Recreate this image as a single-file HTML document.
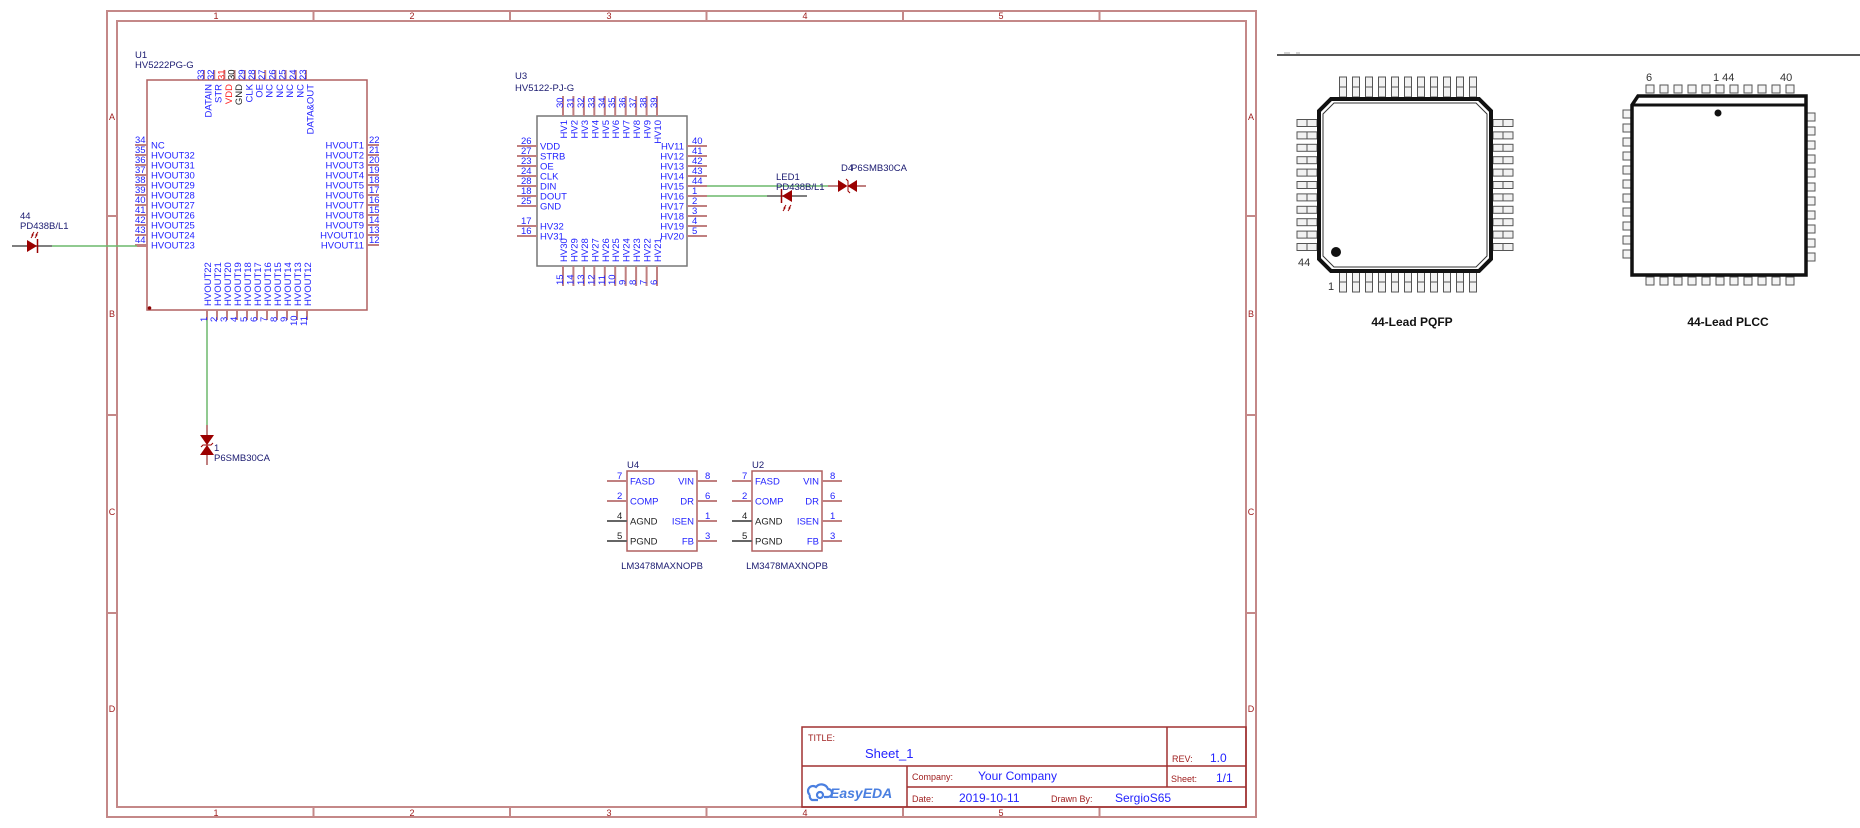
<!DOCTYPE html>
<html><head><meta charset="utf-8"><style>
html,body{margin:0;padding:0;background:#fff;width:1860px;height:828px;overflow:hidden}
svg{display:block}
text{font-family:"Liberation Sans",sans-serif}
.b{fill:#2323ff;font-size:9.5px}
.k{fill:#222;font-size:9.5px}
.r{fill:#ff2020;font-size:9.5px}
.n{fill:#1a1a70;font-size:9.5px}
.fr{fill:#a02020;font-size:9px}
.p{stroke:#c08080;stroke-width:2}
.pg{stroke:#666;stroke-width:2}
</style></head><body>
<svg width="1860" height="828" viewBox="0 0 1860 828" xmlns="http://www.w3.org/2000/svg">
<!-- frame -->
<g fill="none" stroke="#c48888" stroke-width="2">
<rect x="107" y="11" width="1149" height="806"/>
<rect x="117" y="21" width="1129" height="786"/>
<path d="M313.5 11V21M510 11V21M706.5 11V21M903 11V21M1099.5 11V21M313.5 807V817M510 807V817M706.5 807V817M903 807V817M1099.5 807V817M107 216H117M107 415H117M107 613H117M1246 216H1256M1246 415H1256M1246 613H1256"/>
</g>
<g class="fr" text-anchor="middle" font-size="9">
<text x="216" y="19">1</text><text x="412" y="19">2</text><text x="609" y="19">3</text><text x="805" y="19">4</text><text x="1001" y="19">5</text>
<text x="216" y="816">1</text><text x="412" y="816">2</text><text x="609" y="816">3</text><text x="805" y="816">4</text><text x="1001" y="816">5</text>
<text x="112" y="120">A</text><text x="112" y="317">B</text><text x="112" y="515">C</text><text x="112" y="712">D</text>
<text x="1251" y="120">A</text><text x="1251" y="317">B</text><text x="1251" y="515">C</text><text x="1251" y="712">D</text>
</g>
<!-- title block -->
<g fill="none" stroke="#a03030" stroke-width="1.5">
<rect x="802" y="727" width="444" height="80"/>
<path d="M802 766H1246M907 787H1246M907 766V807M1167 727V787"/>
</g>
<text class="fr" x="808" y="741" font-size="9">TITLE:</text>
<text x="865" y="758" fill="#2323ff" font-size="13">Sheet_1</text>
<text class="fr" x="1172" y="762" font-size="10">REV:</text>
<text x="1210" y="762" fill="#2323ff" font-size="12">1.0</text>
<text class="fr" x="912" y="780" font-size="10">Company:</text>
<text x="978" y="780" fill="#2323ff" font-size="12">Your Company</text>
<text class="fr" x="1171" y="782" font-size="10">Sheet:</text>
<text x="1216" y="782" fill="#2323ff" font-size="12">1/1</text>
<text class="fr" x="912" y="802" font-size="10">Date:</text>
<text x="959" y="802" fill="#2323ff" font-size="12">2019-10-11</text>
<text class="fr" x="1051" y="802" font-size="10">Drawn By:</text>
<text x="1115" y="802" fill="#2323ff" font-size="12">SergioS65</text>
<g fill="none" stroke="#4a7fe0" stroke-width="2.2"><path d="M810 795a5 5 0 0 1 6-8a7 7 0 0 1 12 2a4 4 0 0 1 0 8h-4M818 800h-6a4 4 0 0 1-2-5"/><circle cx="820" cy="795" r="3"/></g>
<text x="830" y="798" fill="#4a7fe0" font-size="14" font-style="italic" font-weight="bold">EasyEDA</text>

<!-- U1 -->
<text class="n" x="135" y="58">U1</text><text class="n" x="135" y="68">HV5222PG-G</text>
<rect x="147" y="80" width="220" height="230" fill="none" stroke="#b06060" stroke-width="1.5"/>
<circle cx="149.5" cy="308" r="1.8" fill="#8b0000"/>
<g class="p"><path d="M204 70V80M214.2 70V80M224.4 70V80M234.6 70V80M244.8 70V80M255 70V80M265.2 70V80M275.4 70V80M285.6 70V80M295.8 70V80M306 70V80"/>
<path d="M135 145H147M135 155H147M135 165H147M135 175H147M135 185H147M135 195H147M135 205H147M135 215H147M135 225H147M135 235H147M135 245H147"/>
<path d="M367 145H379M367 155H379M367 165H379M367 175H379M367 185H379M367 195H379M367 205H379M367 215H379M367 225H379M367 235H379M367 245H379"/>
<path d="M207 310V320M217 310V320M227 310V320M237 310V320M247 310V320M257 310V320M267 310V320M277 310V320M287 310V320M297 310V320M307 310V320"/></g>
<g class="b">
<text transform="translate(204,80) rotate(-90)">33</text><text transform="translate(214.2,80) rotate(-90)">32</text><text class="r" transform="translate(224.4,80) rotate(-90)">31</text><text class="k" transform="translate(234.6,80) rotate(-90)">30</text><text transform="translate(244.8,80) rotate(-90)">29</text><text transform="translate(255,80) rotate(-90)">28</text><text transform="translate(265.2,80) rotate(-90)">27</text><text transform="translate(275.4,80) rotate(-90)">26</text><text transform="translate(285.6,80) rotate(-90)">25</text><text transform="translate(295.8,80) rotate(-90)">24</text><text transform="translate(306,80) rotate(-90)">23</text>
</g>
<g class="b" text-anchor="end">
<text transform="translate(211.5,84) rotate(-90)">DATAIN</text><text transform="translate(221.7,84) rotate(-90)">STR</text><text class="r" transform="translate(231.9,84) rotate(-90)">VDD</text><text class="k" transform="translate(242.1,84) rotate(-90)">GND</text><text transform="translate(252.3,84) rotate(-90)">CLK</text><text transform="translate(262.5,84) rotate(-90)">OE</text><text transform="translate(272.7,84) rotate(-90)">NC</text><text transform="translate(282.9,84) rotate(-90)">NC</text><text transform="translate(293.1,84) rotate(-90)">NC</text><text transform="translate(303.3,84) rotate(-90)">NC</text><text transform="translate(313.5,84) rotate(-90)">DATA&amp;OUT</text>
</g>
<g class="b">
<text x="135" y="143">34</text><text x="135" y="153">35</text><text x="135" y="163">36</text><text x="135" y="173">37</text><text x="135" y="183">38</text><text x="135" y="193">39</text><text x="135" y="203">40</text><text x="135" y="213">41</text><text x="135" y="223">42</text><text x="135" y="233">43</text><text x="135" y="243">44</text>
<text x="151" y="148.5">NC</text><text x="151" y="158.5">HVOUT32</text><text x="151" y="168.5">HVOUT31</text><text x="151" y="178.5">HVOUT30</text><text x="151" y="188.5">HVOUT29</text><text x="151" y="198.5">HVOUT28</text><text x="151" y="208.5">HVOUT27</text><text x="151" y="218.5">HVOUT26</text><text x="151" y="228.5">HVOUT25</text><text x="151" y="238.5">HVOUT24</text><text x="151" y="248.5">HVOUT23</text>
<text x="369" y="143">22</text><text x="369" y="153">21</text><text x="369" y="163">20</text><text x="369" y="173">19</text><text x="369" y="183">18</text><text x="369" y="193">17</text><text x="369" y="203">16</text><text x="369" y="213">15</text><text x="369" y="223">14</text><text x="369" y="233">13</text><text x="369" y="243">12</text>
</g>
<g class="b" text-anchor="end">
<text x="364" y="148.5">HVOUT1</text><text x="364" y="158.5">HVOUT2</text><text x="364" y="168.5">HVOUT3</text><text x="364" y="178.5">HVOUT4</text><text x="364" y="188.5">HVOUT5</text><text x="364" y="198.5">HVOUT6</text><text x="364" y="208.5">HVOUT7</text><text x="364" y="218.5">HVOUT8</text><text x="364" y="228.5">HVOUT9</text><text x="364" y="238.5">HVOUT10</text><text x="364" y="248.5">HVOUT11</text>
</g>
<g class="b">
<text transform="translate(211,306) rotate(-90)">HVOUT22</text><text transform="translate(221,306) rotate(-90)">HVOUT21</text><text transform="translate(231,306) rotate(-90)">HVOUT20</text><text transform="translate(241,306) rotate(-90)">HVOUT19</text><text transform="translate(251,306) rotate(-90)">HVOUT18</text><text transform="translate(261,306) rotate(-90)">HVOUT17</text><text transform="translate(271,306) rotate(-90)">HVOUT16</text><text transform="translate(281,306) rotate(-90)">HVOUT15</text><text transform="translate(291,306) rotate(-90)">HVOUT14</text><text transform="translate(301,306) rotate(-90)">HVOUT13</text><text transform="translate(311,306) rotate(-90)">HVOUT12</text>
<text transform="translate(207,322) rotate(-90)">1</text><text transform="translate(217,322) rotate(-90)">2</text><text transform="translate(227,322) rotate(-90)">3</text><text transform="translate(237,322) rotate(-90)">4</text><text transform="translate(247,322) rotate(-90)">5</text><text transform="translate(257,322) rotate(-90)">6</text><text transform="translate(267,322) rotate(-90)">7</text><text transform="translate(277,322) rotate(-90)">8</text><text transform="translate(287,322) rotate(-90)">9</text><text transform="translate(297,326) rotate(-90)">10</text><text transform="translate(307,326) rotate(-90)">11</text>
</g>
<!-- left LED -->
<text class="n" x="20" y="219">44</text><text class="n" x="20" y="229">PD438B/L1</text>
<path d="M12 246H52" stroke="#555" stroke-width="1.5"/>
<path d="M52 246H137" stroke="#6cb86c" stroke-width="1.5"/>
<path d="M137 246H147" class="p"/>
<path d="M27 240L37 246L27 252Z" fill="#9b0000"/><path d="M37.5 239V253" stroke="#9b0000" stroke-width="1.5"/>
<path d="M31 238l2-3-1 0 2-3M35 238l2-3-1 0 2-3" stroke="#9b0000" fill="none" stroke-width="1"/>
<!-- TVS vertical -->
<path d="M207 320V425" stroke="#6cb86c" stroke-width="1.5"/>
<path d="M207 425V435M207 455V465" class="p"/>
<path d="M200 435H214L207 445ZM200 455H214L207 445Z" fill="#9b0000"/>
<path d="M201 447L203 445H211L213 443" stroke="#9b0000" fill="none" stroke-width="1"/>
<text class="n" x="214" y="451">1</text><text class="n" x="214" y="461">P6SMB30CA</text>

<!-- U3 -->
<text class="n" x="515" y="79">U3</text><text class="n" x="515" y="91">HV5122-PJ-G</text>
<rect x="537" y="116" width="150" height="150" fill="none" stroke="#777" stroke-width="1.5"/>
<g class="p"><path d="M563 96V116M573.4 96V116M583.9 96V116M594.3 96V116M604.8 96V116M615.2 96V116M625.7 96V116M636.1 96V116M646.6 96V116M657 96V116"/>
<path d="M563 266V286M573.4 266V286M583.9 266V286M594.3 266V286M604.8 266V286M615.2 266V286M625.7 266V286M636.1 266V286M646.6 266V286M657 266V286"/>
<path d="M517 146H537M517 156H537M517 166H537M517 176H537M517 186H537M517 196H537M517 206H537M517 226H537M517 236H537"/>
<path d="M687 146H707M687 156H707M687 166H707M687 176H707M687 186H707M687 196H707M687 206H707M687 216H707M687 226H707M687 236H707"/></g>
<g class="b">
<text transform="translate(563,108) rotate(-90)">30</text><text transform="translate(573.4,108) rotate(-90)">31</text><text transform="translate(583.9,108) rotate(-90)">32</text><text transform="translate(594.3,108) rotate(-90)">33</text><text transform="translate(604.8,108) rotate(-90)">34</text><text transform="translate(615.2,108) rotate(-90)">35</text><text transform="translate(625.7,108) rotate(-90)">36</text><text transform="translate(636.1,108) rotate(-90)">37</text><text transform="translate(646.6,108) rotate(-90)">38</text><text transform="translate(657,108) rotate(-90)">39</text>
<text transform="translate(563,285) rotate(-90)">15</text><text transform="translate(573.4,285) rotate(-90)">14</text><text transform="translate(583.9,285) rotate(-90)">13</text><text transform="translate(594.3,285) rotate(-90)">12</text><text transform="translate(604.8,285) rotate(-90)">11</text><text transform="translate(615.2,285) rotate(-90)">10</text><text transform="translate(625.7,285) rotate(-90)">9</text><text transform="translate(636.1,285) rotate(-90)">8</text><text transform="translate(646.6,285) rotate(-90)">7</text><text transform="translate(657,285) rotate(-90)">6</text>
<text transform="translate(567,262) rotate(-90)">HV30</text><text transform="translate(577.4,262) rotate(-90)">HV29</text><text transform="translate(587.9,262) rotate(-90)">HV28</text><text transform="translate(598.3,262) rotate(-90)">HV27</text><text transform="translate(608.8,262) rotate(-90)">HV26</text><text transform="translate(619.2,262) rotate(-90)">HV25</text><text transform="translate(629.7,262) rotate(-90)">HV24</text><text transform="translate(640.1,262) rotate(-90)">HV23</text><text transform="translate(650.6,262) rotate(-90)">HV22</text><text transform="translate(661,262) rotate(-90)">HV21</text>
</g>
<g class="b" text-anchor="end">
<text transform="translate(567,120) rotate(-90)">HV1</text><text transform="translate(577.4,120) rotate(-90)">HV2</text><text transform="translate(587.9,120) rotate(-90)">HV3</text><text transform="translate(598.3,120) rotate(-90)">HV4</text><text transform="translate(608.8,120) rotate(-90)">HV5</text><text transform="translate(619.2,120) rotate(-90)">HV6</text><text transform="translate(629.7,120) rotate(-90)">HV7</text><text transform="translate(640.1,120) rotate(-90)">HV8</text><text transform="translate(650.6,120) rotate(-90)">HV9</text><text transform="translate(661,120) rotate(-90)">HV10</text>
<text x="684" y="149.5">HV11</text><text x="684" y="159.5">HV12</text><text x="684" y="169.5">HV13</text><text x="684" y="179.5">HV14</text><text x="684" y="189.5">HV15</text><text x="684" y="199.5">HV16</text><text x="684" y="209.5">HV17</text><text x="684" y="219.5">HV18</text><text x="684" y="229.5">HV19</text><text x="684" y="239.5">HV20</text>
</g>
<g class="b">
<text x="521" y="144">26</text><text x="521" y="154">27</text><text x="521" y="164">23</text><text x="521" y="174">24</text><text x="521" y="184">28</text><text x="521" y="194">18</text><text x="521" y="204">25</text><text x="521" y="224">17</text><text x="521" y="234">16</text>
<text x="540" y="149.5">VDD</text><text x="540" y="159.5">STRB</text><text x="540" y="169.5">OE</text><text x="540" y="179.5">CLK</text><text x="540" y="189.5">DIN</text><text x="540" y="199.5">DOUT</text><text x="540" y="209.5">GND</text><text x="540" y="229.5">HV32</text><text x="540" y="239.5">HV31</text>
<text x="692" y="144">40</text><text x="692" y="154">41</text><text x="692" y="164">42</text><text x="692" y="174">43</text><text x="692" y="184">44</text><text x="692" y="194">1</text><text x="692" y="204">2</text><text x="692" y="214">3</text><text x="692" y="224">4</text><text x="692" y="234">5</text>
</g>
<!-- wires LED1 / D4 -->
<path d="M707 186H828M707 196H767" stroke="#6cb86c" stroke-width="1.5"/>
<path d="M767 196H807" stroke="#555" stroke-width="1.5"/>
<path d="M792 190L782 196L792 202Z" fill="#9b0000"/><path d="M781.5 189V203" stroke="#9b0000" stroke-width="1.5"/>
<path d="M783 211l2-3-1 0 2-3M788 211l2-3-1 0 2-3" stroke="#9b0000" fill="none" stroke-width="1"/>
<text class="n" x="776" y="180">LED1</text><text class="n" x="776" y="190">PD438B/L1</text>
<path d="M828 186H838M857 186H866" class="p"/>
<path d="M838 180V192L847.5 186ZM857 180V192L847.5 186Z" fill="#9b0000"/>
<path d="M846 179L848 181V191L850 193" stroke="#9b0000" fill="none" stroke-width="1"/>
<text class="n" x="841" y="171">D4</text><text class="n" x="851" y="171">P6SMB30CA</text>

<!-- U4 -->
<text class="n" x="627" y="468">U4</text>
<rect x="627" y="471" width="70" height="80" fill="none" stroke="#b06060" stroke-width="1.5"/>
<path d="M607 481H627M607 501H627M697 481H717M697 501H717M697 521H717M697 541H717" class="p"/>
<path d="M607 521H627M607 541H627" class="pg"/>
<g class="b"><text x="617" y="479">7</text><text x="617" y="499">2</text><text class="k" x="617" y="519">4</text><text class="k" x="617" y="539">5</text>
<text x="630" y="484.5">FASD</text><text x="630" y="504.5">COMP</text><text class="k" x="630" y="524.5">AGND</text><text class="k" x="630" y="544.5">PGND</text>
<text x="705" y="479">8</text><text x="705" y="499">6</text><text x="705" y="519">1</text><text x="705" y="539">3</text></g>
<g class="b" text-anchor="end"><text x="694" y="484.5">VIN</text><text x="694" y="504.5">DR</text><text x="694" y="524.5">ISEN</text><text x="694" y="544.5">FB</text></g>
<text class="n" x="662" y="569" text-anchor="middle">LM3478MAXNOPB</text>
<!-- U2 -->
<text class="n" x="752" y="468">U2</text>
<rect x="752" y="471" width="70" height="80" fill="none" stroke="#b06060" stroke-width="1.5"/>
<path d="M732 481H752M732 501H752M822 481H842M822 501H842M822 521H842M822 541H842" class="p"/>
<path d="M732 521H752M732 541H752" class="pg"/>
<g class="b"><text x="742" y="479">7</text><text x="742" y="499">2</text><text class="k" x="742" y="519">4</text><text class="k" x="742" y="539">5</text>
<text x="755" y="484.5">FASD</text><text x="755" y="504.5">COMP</text><text class="k" x="755" y="524.5">AGND</text><text class="k" x="755" y="544.5">PGND</text>
<text x="830" y="479">8</text><text x="830" y="499">6</text><text x="830" y="519">1</text><text x="830" y="539">3</text></g>
<g class="b" text-anchor="end"><text x="819" y="484.5">VIN</text><text x="819" y="504.5">DR</text><text x="819" y="524.5">ISEN</text><text x="819" y="544.5">FB</text></g>
<text class="n" x="787" y="569" text-anchor="middle">LM3478MAXNOPB</text>

<!-- right panel -->
<path d="M1277 55H1860" stroke="#222" stroke-width="1.5"/>
<path d="M1284 53h6M1296 53h4" stroke="#aaa" stroke-width="1"/>
<defs>
<g id="tp"><rect x="-3.5" y="0" width="7" height="20" fill="#f2f2f2" stroke="#555" stroke-width="1"/><path d="M-3.5 10h7" stroke="#555" stroke-width="1"/></g>
<g id="lp"><rect x="0" y="-3.5" width="20" height="7" fill="#f2f2f2" stroke="#555" stroke-width="1"/><path d="M10 -3.5v7" stroke="#555" stroke-width="1"/></g>
<rect id="sq" x="-4" y="-4" width="8" height="8" fill="#f4f4f4" stroke="#555" stroke-width="1"/>
</defs>
<g>
<use href="#tp" x="1343" y="77"/><use href="#tp" x="1356" y="77"/><use href="#tp" x="1369" y="77"/><use href="#tp" x="1382" y="77"/><use href="#tp" x="1395" y="77"/><use href="#tp" x="1408" y="77"/><use href="#tp" x="1421" y="77"/><use href="#tp" x="1434" y="77"/><use href="#tp" x="1447" y="77"/><use href="#tp" x="1460" y="77"/><use href="#tp" x="1473" y="77"/>
<use href="#tp" x="1343" y="272"/><use href="#tp" x="1356" y="272"/><use href="#tp" x="1369" y="272"/><use href="#tp" x="1382" y="272"/><use href="#tp" x="1395" y="272"/><use href="#tp" x="1408" y="272"/><use href="#tp" x="1421" y="272"/><use href="#tp" x="1434" y="272"/><use href="#tp" x="1447" y="272"/><use href="#tp" x="1460" y="272"/><use href="#tp" x="1473" y="272"/>
<use href="#lp" x="1297" y="123"/><use href="#lp" x="1297" y="135.4"/><use href="#lp" x="1297" y="147.8"/><use href="#lp" x="1297" y="160.2"/><use href="#lp" x="1297" y="172.6"/><use href="#lp" x="1297" y="185"/><use href="#lp" x="1297" y="197.4"/><use href="#lp" x="1297" y="209.8"/><use href="#lp" x="1297" y="222.2"/><use href="#lp" x="1297" y="234.6"/><use href="#lp" x="1297" y="247"/>
<use href="#lp" x="1493" y="123"/><use href="#lp" x="1493" y="135.4"/><use href="#lp" x="1493" y="147.8"/><use href="#lp" x="1493" y="160.2"/><use href="#lp" x="1493" y="172.6"/><use href="#lp" x="1493" y="185"/><use href="#lp" x="1493" y="197.4"/><use href="#lp" x="1493" y="209.8"/><use href="#lp" x="1493" y="222.2"/><use href="#lp" x="1493" y="234.6"/><use href="#lp" x="1493" y="247"/>
</g>
<path d="M1331 99H1479L1491 111V259L1479 271H1331L1319 259V111Z" fill="#fff" stroke="#111" stroke-width="4"/>
<path d="M1334 103H1476L1487 114V256L1476 267H1334L1323 256V114Z" fill="none" stroke="#333" stroke-width="1"/>
<circle cx="1336" cy="252" r="5" fill="#111"/>
<text x="1298" y="266" fill="#333" font-size="11">44</text>
<text x="1328" y="290" fill="#333" font-size="11">1</text>
<text x="1412" y="326" text-anchor="middle" font-size="12" font-weight="bold" fill="#111">44-Lead PQFP</text>

<g>
<use href="#sq" x="1650" y="89"/><use href="#sq" x="1664" y="89"/><use href="#sq" x="1678" y="89"/><use href="#sq" x="1692" y="89"/><use href="#sq" x="1706" y="89"/><use href="#sq" x="1720" y="89"/><use href="#sq" x="1734" y="89"/><use href="#sq" x="1748" y="89"/><use href="#sq" x="1762" y="89"/><use href="#sq" x="1776" y="89"/><use href="#sq" x="1790" y="89"/>
<use href="#sq" x="1650" y="281"/><use href="#sq" x="1664" y="281"/><use href="#sq" x="1678" y="281"/><use href="#sq" x="1692" y="281"/><use href="#sq" x="1706" y="281"/><use href="#sq" x="1720" y="281"/><use href="#sq" x="1734" y="281"/><use href="#sq" x="1748" y="281"/><use href="#sq" x="1762" y="281"/><use href="#sq" x="1776" y="281"/><use href="#sq" x="1790" y="281"/>
<use href="#sq" x="1627" y="114"/><use href="#sq" x="1627" y="128"/><use href="#sq" x="1627" y="142"/><use href="#sq" x="1627" y="156"/><use href="#sq" x="1627" y="170"/><use href="#sq" x="1627" y="184"/><use href="#sq" x="1627" y="198"/><use href="#sq" x="1627" y="212"/><use href="#sq" x="1627" y="226"/><use href="#sq" x="1627" y="240"/><use href="#sq" x="1627" y="254"/>
<use href="#sq" x="1811" y="117"/><use href="#sq" x="1811" y="131"/><use href="#sq" x="1811" y="145"/><use href="#sq" x="1811" y="159"/><use href="#sq" x="1811" y="173"/><use href="#sq" x="1811" y="187"/><use href="#sq" x="1811" y="201"/><use href="#sq" x="1811" y="215"/><use href="#sq" x="1811" y="229"/><use href="#sq" x="1811" y="243"/><use href="#sq" x="1811" y="257"/>
</g>
<path d="M1638 96H1806V275H1632V105Z" fill="#fff" stroke="#111" stroke-width="3.5"/>
<path d="M1632 105H1806" stroke="#111" stroke-width="3"/>
<circle cx="1718" cy="113" r="3.5" fill="#111"/>
<text x="1646" y="81" fill="#333" font-size="11">6</text>
<text x="1713" y="81" fill="#333" font-size="11">1 44</text>
<text x="1780" y="81" fill="#333" font-size="11">40</text>
<text x="1728" y="326" text-anchor="middle" font-size="12" font-weight="bold" fill="#111">44-Lead PLCC</text>
</svg>
</body></html>
